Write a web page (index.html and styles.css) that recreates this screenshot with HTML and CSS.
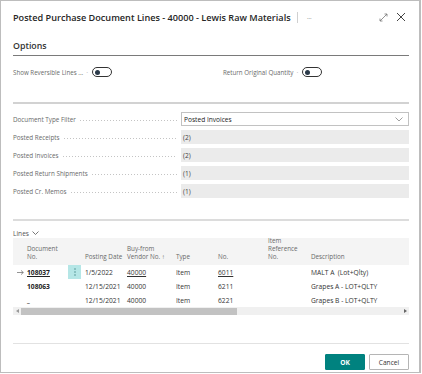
FILE: index.html
```html
<!DOCTYPE html>
<html>
<head>
<meta charset="utf-8">
<link rel="stylesheet" href="styles.css">
</head>
<body>
<div class="dialog">
  <div class="titlebar">
    <div class="title">Posted Purchase Document Lines - 40000 - Lewis Raw Materials</div>
    <div class="tsep"></div>
    <div class="more">···</div>
    <div class="spacer"></div>
    <svg class="expand" width="9" height="9" viewBox="0 0 9 9"><path d="M1 8 L8 1 M5.5 1 H8 V3.5 M1 5.5 V8 H3.5" fill="none" stroke="#777" stroke-width="0.8"/></svg>
    <svg class="close" width="10" height="10" viewBox="0 0 10 10"><path d="M1 1 L9 9 M9 1 L1 9" fill="none" stroke="#444" stroke-width="1"/></svg>
  </div>

  <div class="section-title">Options</div>
  <div class="options">
    <div class="opt opt1">
      <span class="olabel">Show Reversible Lines ...</span><span class="odot">·</span>
      <span class="toggle"><span class="knob"></span></span>
    </div>
    <div class="opt opt2">
      <span class="olabel">Return Original Quantity</span><span class="odot">·</span>
      <span class="toggle"><span class="knob"></span></span>
    </div>
  </div>

  <div class="rule rule1"></div>

  <div class="fields">
    <div class="frow">
      <div class="flabel"><span>Document Type Filter</span><span class="lead"></span></div>
      <div class="fval select"><span>Posted Invoices</span>
        <svg width="8" height="5" viewBox="0 0 8 5"><path d="M0.5 0.5 L4 4 L7.5 0.5" fill="none" stroke="#888" stroke-width="0.8"/></svg>
      </div>
    </div>
    <div class="frow">
      <div class="flabel"><span>Posted Receipts</span><span class="lead"></span></div>
      <div class="fval ro">(2)</div>
    </div>
    <div class="frow">
      <div class="flabel"><span>Posted Invoices</span><span class="lead"></span></div>
      <div class="fval ro">(2)</div>
    </div>
    <div class="frow">
      <div class="flabel"><span>Posted Return Shipments</span><span class="lead"></span></div>
      <div class="fval ro">(1)</div>
    </div>
    <div class="frow">
      <div class="flabel"><span>Posted Cr. Memos</span><span class="lead"></span></div>
      <div class="fval ro">(1)</div>
    </div>
  </div>

  <div class="rule rule2"></div>

  <div class="lines-title">Lines <svg width="7" height="4" viewBox="0 0 7 4"><path d="M0.5 0.5 L3.5 3.5 L6.5 0.5" fill="none" stroke="#555" stroke-width="0.8"/></svg></div>

  <div class="grid">
    <div class="hd"></div>
    <div class="hd">Document<br>No.</div>
    <div class="hd"></div>
    <div class="hd">Posting Date</div>
    <div class="hd">Buy-from<br>Vendor No. ↑</div>
    <div class="hd">Type</div>
    <div class="hd">No.</div>
    <div class="hd">Item<br>Reference<br>No.</div>
    <div class="hd">Description</div>

    <div class="c arrow"><svg width="7" height="5" viewBox="0 0 7 5"><path d="M0 2.5 H6.3 M4 0.4 L6.3 2.5 L4 4.6" fill="none" stroke="#666" stroke-width="0.7"/></svg></div>
    <div class="c b u">108037</div>
    <div class="c kebab"><svg width="2" height="8" viewBox="0 0 2 8"><circle cx="1" cy="1" r="0.7" fill="#3d7f80"/><circle cx="1" cy="4" r="0.7" fill="#3d7f80"/><circle cx="1" cy="7" r="0.7" fill="#3d7f80"/></svg></div>
    <div class="c">1/5/2022</div>
    <div class="c u">40000</div>
    <div class="c">Item</div>
    <div class="c u">6011</div>
    <div class="c"></div>
    <div class="c">MALT A&nbsp; (Lot+Qlty)</div>

    <div class="c"></div>
    <div class="c b">108063</div>
    <div class="c"></div>
    <div class="c">12/15/2021</div>
    <div class="c">40000</div>
    <div class="c">Item</div>
    <div class="c">6211</div>
    <div class="c"></div>
    <div class="c">Grapes A - LOT+QLTY</div>

    <div class="c"></div>
    <div class="c b">_</div>
    <div class="c"></div>
    <div class="c">12/15/2021</div>
    <div class="c">40000</div>
    <div class="c">Item</div>
    <div class="c">6221</div>
    <div class="c"></div>
    <div class="c">Grapes B - LOT+QLTY</div>
  </div>

  <div class="hscroll">
    <span class="sarrow"><svg width="3" height="4" viewBox="0 0 3 4"><path d="M3 0 L0 2 L3 4 Z" fill="#999"/></svg></span>
    <span class="thumb"></span>
    <span class="track"></span>
    <span class="sarrow"><svg width="3" height="4" viewBox="0 0 3 4"><path d="M0 0 L3 2 L0 4 Z" fill="#666"/></svg></span>
  </div>

  <div class="rule rule3"></div>

  <div class="footer">
    <button class="btn ok">OK</button>
    <button class="btn cancel">Cancel</button>
  </div>
</div>
</body>
</html>
```

FILE: styles.css
```css
* { box-sizing: border-box; }
html, body { margin: 0; padding: 0; background: #fff; }
body { font-family: "Open Sans", "Noto Sans", sans-serif; color: #212121; }

.dialog {
  width: 421px;
  height: 373px;
  border: 1px solid #bdbdbd;
  border-right-width: 2px;
  padding: 0 10px 0 12px;
  display: flex;
  flex-direction: column;
  overflow: hidden;
}

.titlebar {
  height: 32px;
  display: flex;
  align-items: center;
}
.title {
  font-size: 9.15px;
  font-weight: 600;
  color: #262626;
  white-space: nowrap;
}
.tsep { width: 1px; height: 11px; background: #d0d0d0; margin-left: 6px; }
.more { font-size: 8px; color: #999; margin-left: 9px; letter-spacing: -0.5px; }
.spacer { flex: 1; }
.expand { margin-right: 8px; }
.close { margin-right: 3px; }

.section-title {
  margin-top: 6px;
  font-size: 8.8px;
  font-weight: 600;
  color: #333;
  line-height: 14px;
  padding-bottom: 2px;
  border-bottom: 1px solid #7a7a7a;
}

.options {
  display: flex;
  margin-top: 10px;
  height: 12px;
  align-items: center;
}
.opt { display: flex; align-items: center; }
.opt1 { width: 210px; flex-shrink: 0; }
.olabel { font-size: 6.2px; color: #6a6a6a; white-space: nowrap; }
.odot { font-size: 7px; color: #aaa; margin: 0 4px 0 3px; }
.toggle {
  width: 20px; height: 10px;
  border: 1px solid #333;
  border-radius: 5px;
  display: flex; align-items: center;
  padding-left: 2px;
}
.knob { width: 5px; height: 5px; border-radius: 50%; background: #2b3a4a; }

.rule { height: 1px; background: #c8c8c8; }
.rule1 { margin-top: 24px; height: 2px; background: #d2d2d2; }

.fields { margin-top: 8px; display: flex; flex-direction: column; gap: 4px; }
.frow { display: flex; height: 14px; align-items: stretch; }
.flabel {
  width: 168px;
  display: flex;
  align-items: center;
  font-size: 6.3px;
  color: #6a6a6a;
  white-space: nowrap;
}
.lead {
  flex: 1;
  height: 1px;
  margin: 2px 4px 0 4px;
  background-image: linear-gradient(to right, #c4c4c4 1px, transparent 1px);
  background-size: 3px 1px;
}
.fval {
  flex: 1;
  display: flex;
  align-items: center;
  padding-left: 2px;
  font-size: 6.6px;
  color: #444;
}
.fval.ro { background: #ebebeb; }
.fval.select {
  border: 1px solid #c2c2c2;
  background: #fff;
  justify-content: space-between;
  padding-right: 5px;
  color: #222;
}

.rule2 { margin-top: 21px; height: 2px; background: #dcdcdc; }

.lines-title {
  margin-top: 7px;
  font-size: 6.6px;
  color: #555;
  display: flex;
  align-items: center;
  gap: 3px;
  height: 10px;
}

.grid {
  margin-top: 0;
  display: grid;
  grid-template-columns: 14px 41px 13px 46px 49px 42px 50px 43px 1fr;
  grid-template-rows: 27px 14px 14px 14px;
  font-size: 6.7px;
}
.hd {
  background: #f4f4f4;
  color: #6a6a6a;
  display: flex;
  align-items: flex-end;
  padding-bottom: 4px;
  line-height: 8px;
  font-size: 6.3px;
}
.grid > :nth-child(9n+4) { padding-left: 4px; }
.c {
  display: flex;
  align-items: center;
  color: #333;
  white-space: nowrap;
}
.c.b { font-weight: 700; color: #222; }
.c.u { text-decoration: underline; }
.c.arrow { padding-left: 4px; }
.c.kebab {
  background: #b5e6e6;
  justify-content: center;
}

.hscroll {
  margin-top: 0;
  height: 8px;
  background: #f0f0f0;
  display: flex;
  align-items: center;
}
.sarrow { width: 8px; display: flex; justify-content: center; align-items: center; }
.thumb { width: 216px; height: 7px; background: #c2c2c2; }
.track { flex: 1; }

.rule3 { margin-top: 28px; background: #e2e2e2; }

.footer {
  display: flex;
  justify-content: flex-end;
  gap: 4px;
  margin-top: 10px;
}
.btn {
  height: 16px;
  font-family: "Open Sans", "Noto Sans", sans-serif;
  font-size: 6.6px;
  border-radius: 1px;
  padding: 0;
}
.ok {
  width: 40px;
  background: #00827f;
  color: #fff;
  border: 1px solid #00827f;
  font-weight: 700;
}
.cancel {
  width: 40px;
  background: #fff;
  color: #333;
  border: 1px solid #b5b5b5;
}
```
